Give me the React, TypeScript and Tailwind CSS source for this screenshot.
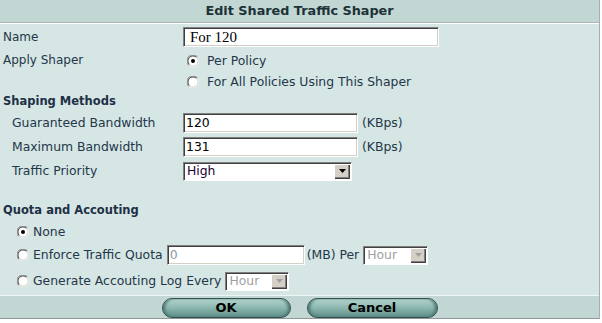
import React from "react";

function Radio({ checked }: { checked?: boolean }) {
  return (
    <svg width="12" height="12" viewBox="0 0 12 12" className="shrink-0">
      <circle cx="6" cy="6" r="5.5" fill="#ffffff" stroke="#ffffff" />
      <path d="M1.6 10.4 A6 6 0 0 1 10.4 1.6" stroke="#808080" strokeWidth="1" fill="none" />
      <path d="M2.4 9.6 A5 5 0 0 1 9.6 2.4" stroke="#404040" strokeWidth="1" fill="none" />
      <path d="M9.6 2.4 A5 5 0 0 1 2.4 9.6" stroke="#d4d0c8" strokeWidth="1" fill="none" />
      {checked && <circle cx="6" cy="6" r="2" fill="#000000" />}
    </svg>
  );
}

function Arrow({ disabled }: { disabled?: boolean }) {
  return (
    <div className="flex h-full w-[16px] items-center justify-center bg-[#d4d0c8] shadow-[inset_1px_1px_0_#ffffff,inset_-1px_-1px_0_#404040,inset_-2px_-2px_0_#808080]">
      <svg width="7" height="4" viewBox="0 0 7 4">
        <polygon points="0,0 7,0 3.5,4" fill={disabled ? "#a0a0a0" : "#000000"} />
      </svg>
    </div>
  );
}

function Select({ value, width, disabled }: { value: string; width: string; disabled?: boolean }) {
  return (
    <div
      className={`flex h-[19px] items-stretch border border-t-[#808080] border-l-[#808080] border-b-white border-r-white bg-white p-[1px] shadow-[inset_1px_1px_0_#404040] ${width}`}
    >
      <div
        className={`flex flex-1 items-center pl-[2px] text-[12.4px] leading-none ${disabled ? "text-[#a0a0a0]" : "text-[#200030]"}`}
      >
        {value}
      </div>
      <Arrow disabled={disabled} />
    </div>
  );
}

function TextBox({ value, width, className = "" }: { value: string; width: string; className?: string }) {
  return (
    <div
      className={`flex h-[20px] items-center border border-t-[#808080] border-l-[#808080] border-b-white border-r-white bg-white pl-[2px] shadow-[inset_1px_1px_0_#404040,inset_-1px_-1px_0_#d4d0c8] ${width} ${className}`}
    >
      {value}
    </div>
  );
}

function Button({ label, width }: { label: string; width: string }) {
  return (
    <div
      className={`flex h-[20px] items-center justify-center rounded-full border border-[#34504e] bg-gradient-to-b from-[#b4d4cf] via-[#8ab6ae] to-[#5f8f88] text-[13px] font-bold text-black shadow-[inset_3px_0_3px_-1px_#4e7a74,inset_-3px_0_3px_-1px_#4e7a74] ${width}`}
    >
      {label}
    </div>
  );
}

export default function App() {
  return (
    <div className="w-[602px] h-[323px] bg-white font-['DejaVu_Sans','Verdana',sans-serif]">
      <div className="w-[600px] border-r border-[#a6aeae] bg-[#d6e6e4] text-[#24364a]">
        {/* Header */}
        <div className="flex h-[22px] items-center justify-center bg-[#c2d6d4] text-[12.8px] font-bold text-[#1b3236]">
          Edit Shared Traffic Shaper
        </div>
        <div className="h-px bg-[#a9b4b4]" />
        <div className="h-px bg-white" />

        {/* Body */}
        <div className="flex flex-col">
          <div className="flex h-[26px] items-center">
            <div className="w-[183px] pl-[3px] text-[12px]">Name</div>
            <TextBox
              value="For 120"
              width="w-[256px]"
              className="pl-[6px] font-['Liberation_Serif',serif] text-[15px] text-black"
            />
          </div>

          <div className="flex h-[22px] items-center">
            <div className="w-[183px] pl-[3px] pb-[2px] text-[12px]">Apply Shaper</div>
            <div className="flex items-center gap-[8px] pl-[4px] text-[12.4px]">
              <Radio checked />
              <span>Per Policy</span>
            </div>
          </div>
          <div className="flex h-[21px] items-center">
            <div className="w-[183px]" />
            <div className="flex items-center gap-[8px] pl-[4px] text-[12.4px]">
              <Radio />
              <span>For All Policies Using This Shaper</span>
            </div>
          </div>

          <div className="flex h-[18px] items-center pl-[3px] text-[11.5px] font-bold text-[#1d3046]">
            Shaping Methods
          </div>

          <div className="flex h-[24px] items-center">
            <div className="w-[183px] pl-[12px] text-[12.4px]">Guaranteed Bandwidth</div>
            <TextBox value="120" width="w-[175px]" className="text-[12.4px] text-black" />
            <span className="ml-[4px] text-[12.4px]">(KBps)</span>
          </div>
          <div className="flex h-[24px] items-center">
            <div className="w-[183px] pl-[12px] text-[12.4px]">Maximum Bandwidth</div>
            <TextBox value="131" width="w-[175px]" className="text-[12.4px] text-black" />
            <span className="ml-[4px] text-[12.4px]">(KBps)</span>
          </div>
          <div className="flex h-[24px] items-center">
            <div className="w-[183px] pl-[12px] text-[12.4px]">Traffic Priority</div>
            <Select value="High" width="w-[169px]" />
          </div>

          <div className="h-[18px]" />

          <div className="flex h-[20px] items-center pl-[3px] text-[11.5px] font-bold text-[#1d3046]">
            Quota and Accouting
          </div>

          <div className="flex h-[22px] items-center gap-[4px] pl-[17px] text-[12.4px]">
            <Radio checked />
            <span>None</span>
          </div>
          <div className="flex h-[24px] items-center gap-[4px] pl-[17px] text-[12.4px]">
            <Radio />
            <span>Enforce Traffic Quota</span>
            <TextBox value="0" width="w-[138px]" className="text-[12.4px] text-[#8a9aa8]" />
            <span className="ml-[-2px]">(MB) Per</span>
            <Select value="Hour" width="w-[65px]" disabled />
          </div>
          <div className="flex h-[28px] items-center gap-[4px] pl-[17px] text-[12.4px]">
            <Radio />
            <span>Generate Accouting Log Every</span>
            <Select value="Hour" width="w-[64px]" disabled />
          </div>
        </div>

        {/* Footer */}
        <div className="h-px bg-[#eef6f5]" />
        <div className="flex h-[22px] items-center justify-center gap-[16px] bg-[#c2d6d4] pt-[1px]">
          <Button label="OK" width="w-[129px]" />
          <Button label="Cancel" width="w-[131px]" />
        </div>
        <div className="h-px bg-[#8e9898]" />
      </div>
    </div>
  );
}
